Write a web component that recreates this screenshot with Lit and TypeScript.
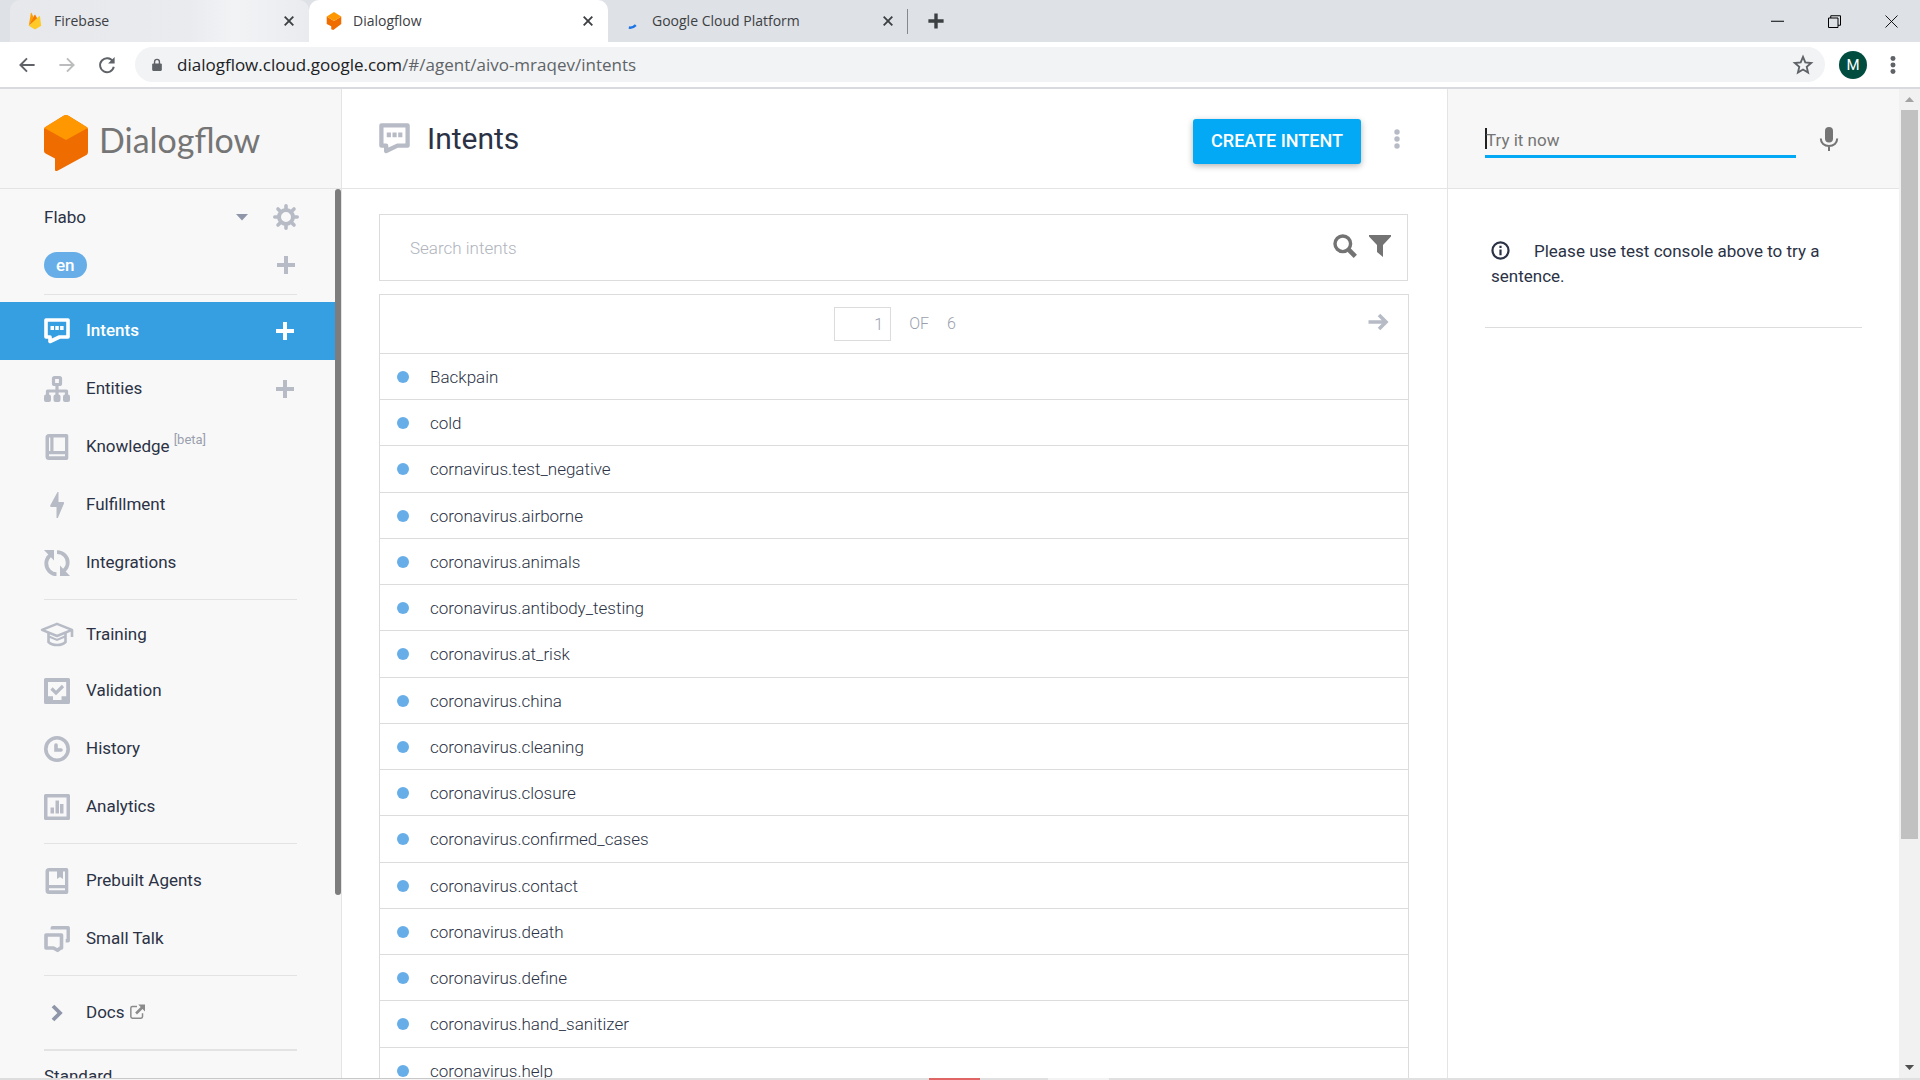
import { LitElement, html, svg, css, nothing } from "lit";
import { customElement, property, state } from "lit/decorators.js";
import { classMap } from "lit/directives/class-map.js";

/* ---------- icon set ---------- */

const chat = svg`
  <path d="M2 2h22v17h-8.500l-9.500 4.500v-4.500h-4z" fill="none" stroke="currentColor" stroke-width="3.600" stroke-linejoin="round"/>
  <path d="M6.500 8h3.500v4h-3.500zM11.300 8h3.500v4h-3.500zM16.100 8h3.500v4h-3.500z"/>`;

const icons: Record<string, unknown> = {
  chat,
  entities: svg`
    <rect x="9.500" y="1.500" width="7" height="7" rx="1" fill="none" stroke="currentColor" stroke-width="3.200"/>
    <path d="M13 9v11M3.500 20v-5h19v5" fill="none" stroke="currentColor" stroke-width="3.200" stroke-linejoin="round"/>
    <rect x="0" y="18.500" width="7" height="7.500" rx="2"/>
    <rect x="9.500" y="18.500" width="7" height="7.500" rx="2"/>
    <rect x="19" y="18.500" width="7" height="7.500" rx="2"/>`,
  knowledge: svg`
    <path fill-rule="evenodd" d="M5 0h17.500a1.800 1.800 0 0 1 1.800 1.800v22.400a1.800 1.800 0 0 1-1.800 1.800h-17.500a3.500 3.500 0 0 1-3.500-3.500v-19a3.500 3.500 0 0 1 3.500-3.500zM9.500 3.500v13.500h11.500v-13.500zM5 3.500v13.500h1.300v-13.500zM5 20.300v2h16v-2z"/>`,
  fulfillment: svg`<path d="M13.500 0 6.200 13.500 6.500 15h6v11h1.300L20 11.500 19.800 10h-5.300V0z"/>`,
  integrations: svg`
    <path d="M12.500 24.200C7 24.200 2.300 19.500 2.300 13.500 2.300 10 4 7 6.500 5M13 2.200C19 2.200 23.700 6.800 23.700 12.500 23.700 16 22 19 19.500 21" fill="none" stroke="currentColor" stroke-width="3.800"/>
    <path d="M0 0h10v10.500zM26 26h-10v-10.500z"/>`,
  training: svg`
    <path d="M-2 7.800 13 1.800 28 7.800 13 14z" fill="none" stroke="currentColor" stroke-width="2.500" stroke-linejoin="round"/>
    <path d="M4.500 10v10c2.500 2.500 5.500 3 8.500 3s6-.5 8.500-3V10M28 8v7" fill="none" stroke="currentColor" stroke-width="2.600"/>
    <path d="m5 14.500 8 3.500 8-3.500" fill="none" stroke="currentColor" stroke-width="2"/>`,
  validation: svg`
    <path fill-rule="evenodd" d="M1.500 0h23a1.500 1.500 0 0 1 1.500 1.500v23a1.500 1.500 0 0 1-1.500 1.500h-23a1.500 1.500 0 0 1-1.500-1.500v-23a1.500 1.500 0 0 1 1.500-1.500zM4 4v14.300h5v3.700h8.500v-3.700h4.700v-14.300z"/>
    <path d="m7.500 10.500 4.500 4.500 7-7" fill="none" stroke="currentColor" stroke-width="3.200"/>`,
  history: svg`
    <circle cx="13" cy="13" r="11.200" fill="none" stroke="currentColor" stroke-width="3.600"/>
    <path d="M12 9v5h5" fill="none" stroke="currentColor" stroke-width="3.600" stroke-linecap="round"/>`,
  analytics: svg`
    <path fill-rule="evenodd" d="M1.500 0h23a1.500 1.500 0 0 1 1.500 1.500v23a1.500 1.500 0 0 1-1.500 1.500h-23a1.500 1.500 0 0 1-1.500-1.500v-23a1.500 1.500 0 0 1 1.500-1.500zM3.500 3.500v19h19v-19z"/>
    <path d="M6.500 13.500h3.500v6h-3.500zM11.500 6.500h3.500v13h-3.500zM16 10h3.500v9.500h-3.500z"/>`,
  prebuilt: svg`
    <path fill-rule="evenodd" d="M5 0h17.500a1.800 1.800 0 0 1 1.800 1.800v22.400a1.800 1.800 0 0 1-1.800 1.800h-17.500a3.500 3.500 0 0 1-3.500-3.500v-19a3.500 3.500 0 0 1 3.500-3.500zM5 3.500v13.500h16v-13.500h-2v7.500l-3-2-3 2v-7.500zM5 20.300v2h16v-2z"/>`,
  smalltalk: svg`
    <path d="M2 9h15.500v13h-1l-3 2.300-4-2.300h-7.500z" fill="none" stroke="currentColor" stroke-width="3.600" stroke-linejoin="round"/>
    <path d="M8.300 3.500v-1.700h15.900v13h-2.500" fill="none" stroke="currentColor" stroke-width="3.400" stroke-linejoin="round"/>`,
  docs: svg`<path d="m9 6 7 7-7 7" fill="none" stroke="#8f96a9" stroke-width="3.800"/>`,
  plus: svg`<path d="M13 4v18M4 13h18" fill="none" stroke="currentColor" stroke-width="4"/>`,
  gear: svg`
    <circle cx="13" cy="13" r="7" fill="none" stroke="currentColor" stroke-width="4"/>
    <path d="M13 1.800v4M13 20.200v4M1.800 13h4M20.200 13h4M5 5l3 3M18 18l3 3M5 21l3-3M18 8l3-3" stroke="currentColor" stroke-width="3.600" stroke-linecap="round"/>`,
  caret: svg`<path d="M7 10h12l-6 6.500z"/>`,
  external: svg`
    <path d="M13 4H5.500C4 4 3 5 3 6.500v14C3 22 4 23 5.500 23h14c1.500 0 2.500-1 2.500-2.500V15" fill="none" stroke="currentColor" stroke-width="2.400"/>
    <path d="M15 1h11v11l-4-4-9 9-3-3 9-9z"/>`,
  kebab: svg`<circle cx="13" cy="6" r="2.700"/><circle cx="13" cy="13" r="2.700"/><circle cx="13" cy="20" r="2.700"/>`,
  search: svg`
    <circle cx="10.800" cy="10.800" r="7.800" fill="none" stroke="currentColor" stroke-width="3.400"/>
    <path d="m16 16 7.300 7.300" stroke="currentColor" stroke-width="4.600"/>`,
  filter: svg`<path d="M2 2h22v1.500L16 12v12l-6-5V12L2 3.500z"/>`,
  next: svg`<path d="M3.500 13h17M14 6l7 7-7 7" fill="none" stroke="currentColor" stroke-width="3.600"/>`,
  mic: svg`
    <rect x="9" y="1" width="8" height="15.500" rx="4"/>
    <path d="M4.800 12.500c0 4.500 3.500 7.500 8.200 7.500s8.200-3 8.200-7.500M13 20v5" fill="none" stroke="currentColor" stroke-width="2"/>`,
  info: svg`
    <circle cx="13" cy="13" r="11" fill="none" stroke="currentColor" stroke-width="3"/>
    <path d="M11.500 11.500h3v8h-3zM11.500 6.500h3v3h-3z"/>`,
  close: svg`<path d="m6 6 14 14M20 6 6 20" stroke="currentColor" stroke-width="3"/>`,
  back: svg`<path d="M24 13H4M13 3.500 3.500 13l9.500 9.500" fill="none" stroke="currentColor" stroke-width="2.800"/>`,
  forward: svg`<path d="M2 13h20M13 3.500 22.500 13 13 22.500" fill="none" stroke="currentColor" stroke-width="2.800"/>`,
  reload: svg`
    <path d="M21.500 8A10 10 0 1 0 22.800 15.500" fill="none" stroke="currentColor" stroke-width="2.800"/>
    <path d="M24 1.500v9.500h-9.500z"/>`,
  lock: svg`
    <rect x="4" y="10" width="18" height="14" rx="2"/>
    <path d="M8.500 11V7a4.500 4.500 0 0 1 9 0v4" fill="none" stroke="currentColor" stroke-width="2.600"/>`,
  star: svg`<path d="m13 3.500 2.700 6.500 7 .6-5.300 4.600 1.600 6.800L13 18.400 7 22l1.600-6.800L3.300 10.600l7-.6z" fill="none" stroke="currentColor" stroke-width="2.200"/>`,
  minimize: svg`<path d="M0 11.500h26v2h-26z"/>`,
  restore: svg`<path d="M1 6h19v19h-19zM5.500 6V1.500H25V20.500H20" fill="none" stroke="currentColor" stroke-width="2"/>`,
  exit: svg`<path d="m1 1 24 24M25 1 1 25" stroke="currentColor" stroke-width="1.800"/>`,
  spinner: svg`<path d="M7 22.500c3 .5 7-.5 10-3.500" fill="none" stroke="#1a73e8" stroke-width="3.600"/>`,
  flame: svg`
    <path d="m4 20 3-18.500c.1-.6.800-.7 1-.2L11 7.500z" fill="#ffa000"/>
    <path d="M4 20 12.300 4.500c.3-.5.900-.5 1.200 0L17 11z" fill="#f57c00"/>
    <path d="m4 20 15-14c.4-.4 1-.2 1.100.3L22 20l-7.700 4.700c-.8.400-1.800.4-2.600 0z" fill="#ffca28"/>`,
  dialog: svg`
    <path d="M2.500 6.500 13 13l10.500-6.500v11L12 26l-3-1v-4.500l-6.500-3z" fill="#ef6c00"/>
    <path d="M13 0 2.500 6.500 13 13l10.500-6.500z" fill="#ff9800"/>`,
  up: svg`<path d="M6 17h14l-7-8z"/>`,
  down: svg`<path d="M6 9h14l-7 8z"/>`,
};

@customElement("df-icon")
export class DfIcon extends LitElement {
  @property() name = "chat";

  static styles = css`
    :host { display: inline-flex; flex: none; width: 26px; height: 26px; }
    .glyph { width: 100%; height: 100%; fill: currentColor; overflow: visible; display: block; }
  `;

  render() {
    return html`<svg class="glyph" viewBox="0 0 26 26" aria-hidden="true">${icons[this.name]}</svg>`;
  }
}

/* ---------- browser chrome ---------- */

const TABS = [
  { title: "Firebase", icon: "flame", kind: "hover" },
  { title: "Dialogflow", icon: "dialog", kind: "active" },
  { title: "Google Cloud Platform", icon: "spinner", kind: "plain" },
];

@customElement("browser-bar")
export class BrowserBar extends LitElement {
  static styles = css`
    :host { display: block; flex: none; font-family: "Open Sans", "Noto Sans", sans-serif; color: #3c4043; }
    button { border: 0; padding: 0; margin: 0; background: none; color: inherit; font: inherit; display: flex; align-items: center; justify-content: center; }
    .strip { display: flex; align-items: center; height: 42px; padding-left: 10px; background: #dee1e6; }
    .tab { display: flex; align-items: center; box-sizing: border-box; width: 299px; height: 42px; padding: 0 12px 0 16px; font-size: 14px; border-radius: 10px 10px 0 0; }
    .tab.hover { background: linear-gradient(90deg, #e6e8ec, #e9ebef 60%, #f2f3f5 75%, #e9ebef); }
    .tab.active { background: #ffffff; }
    .tab.plain { padding-right: 11px; }
    .fav { width: 18px; height: 20px; margin-right: 10px; }
    .name { flex: 1; white-space: nowrap; padding-bottom: 2px; }
    .x { width: 16px; height: 16px; }
    .rule { width: 1px; height: 25px; background: #85888c; }
    .new { width: 56px; }
    .new df-icon { width: 22px; height: 22px; }
    .grow { flex: 1; }
    .win { width: 57px; height: 36px; color: #000000; }
    .win df-icon { width: 13px; height: 13px; }
    .bar { display: flex; align-items: center; height: 45px; padding: 0 15px 0 18px; background: #ffffff; border-bottom: 2px solid #d9dae0; color: #5f6368; }
    .nav { width: 18px; height: 18px; margin-right: 22px; }
    .nav df-icon { width: 18px; height: 18px; }
    .nav.off { color: #babcbe; }
    .nav.last { margin-right: 19px; }
    .pill { flex: 1; display: flex; align-items: center; height: 35px; padding: 0 11px 0 15px; border-radius: 18px; background: #f1f3f4; }
    .pill .lock { width: 14px; height: 16px; margin-right: 13px; }
    .url { flex: 1; font-size: 17px; line-height: 24px; }
    .host { color: #202124; }
    .star df-icon { width: 22px; height: 22px; }
    .me { width: 28px; height: 28px; margin: 0 14px; border-radius: 14px; background: #004d40; color: #ffffff; font: 15px/28px Roboto, sans-serif; }
    .menu df-icon { width: 24px; height: 24px; }
  `;

  render() {
    return html`
      <div class="strip">
        ${TABS.map((t) => html`
          <div class="tab ${t.kind}">
            <df-icon class="fav" name=${t.icon}></df-icon>
            <span class="name">${t.title}</span>
            <button aria-label="Close tab"><df-icon class="x" name="close"></df-icon></button>
          </div>`)}
        <span class="rule"></span>
        <button class="new" aria-label="New tab"><df-icon name="plus"></df-icon></button>
        <span class="grow"></span>
        <button class="win" aria-label="Minimize"><df-icon name="minimize"></df-icon></button>
        <button class="win" aria-label="Restore"><df-icon name="restore"></df-icon></button>
        <button class="win" aria-label="Close"><df-icon name="exit"></df-icon></button>
      </div>
      <div class="bar">
        <button class="nav" aria-label="Back"><df-icon name="back"></df-icon></button>
        <button class="nav off" aria-label="Forward"><df-icon name="forward"></df-icon></button>
        <button class="nav last" aria-label="Reload"><df-icon name="reload"></df-icon></button>
        <div class="pill">
          <df-icon class="lock" name="lock"></df-icon>
          <span class="url"><span class="host">dialogflow.cloud.google.com</span>/#/agent/aivo-mraqev/intents</span>
          <button class="star" aria-label="Bookmark"><df-icon name="star"></df-icon></button>
        </div>
        <button class="me" aria-label="Profile">M</button>
        <button class="menu" aria-label="Browser menu"><df-icon name="kebab"></df-icon></button>
      </div>`;
  }
}

/* ---------- sidebar ---------- */

interface NavItem { label: string; icon: string; add?: boolean; beta?: boolean; out?: boolean; }

const GROUPS: NavItem[][] = [
  [
    { label: "Intents", icon: "chat", add: true },
    { label: "Entities", icon: "entities", add: true },
    { label: "Knowledge", icon: "knowledge", beta: true },
    { label: "Fulfillment", icon: "fulfillment" },
    { label: "Integrations", icon: "integrations" },
  ],
  [
    { label: "Training", icon: "training" },
    { label: "Validation", icon: "validation" },
    { label: "History", icon: "history" },
    { label: "Analytics", icon: "analytics" },
  ],
  [
    { label: "Prebuilt Agents", icon: "prebuilt" },
    { label: "Small Talk", icon: "smalltalk" },
  ],
  [{ label: "Docs", icon: "docs", out: true }],
];

@customElement("df-sidebar")
export class DfSidebar extends LitElement {
  @state() private current = "Intents";

  static styles = css`
    :host { display: flex; flex-direction: column; flex: none; width: 341px; min-height: 0; background: #f8f8f8; border-right: 1px solid #e4e4e4; color: #2b3245; font: 17px/26px Roboto, sans-serif; }
    button { border: 0; padding: 0; margin: 0; background: none; color: #b7bbc5; display: flex; }
    .brand { display: flex; align-items: center; flex: none; box-sizing: border-box; height: 100px; padding: 8px 44px 0; gap: 11px; border-bottom: 1px solid #e4e4e4; background: #f7f7f7; }
    .mark { width: 44px; height: 56px; flex: none; }
    .word { padding-bottom: 5px; color: #757575; font: 34px/48px Lato, sans-serif; }
    .body { display: flex; flex: 1; min-height: 0; overflow: hidden; }
    .panel { flex: 1; min-width: 0; }
    .thumb { width: 6px; height: 706px; border-radius: 3px; background: #7d7d7d; flex: none; }
    .agent { display: flex; align-items: center; height: 56px; padding: 0 36px 0 44px; }
    .pick { flex: 1; display: flex; align-items: center; }
    select { flex: 1; appearance: none; border: 0; padding: 0; background: none; color: inherit; font: inherit; }
    .pick df-icon { color: #8f96a9; margin-right: 18px; }
    .langs { display: flex; align-items: center; justify-content: space-between; box-sizing: border-box; height: 41px; padding: 0 36px 2px 44px; }
    .lang { height: 26px; padding: 0 12px; border-radius: 13px; background: #67aee9; color: #ffffff; font: 500 17px/26px Roboto, sans-serif; }
    .split { height: 0; margin: 7px 38px 8px 44px; border: 0; border-top: 1px solid #e3e3e3; }
    .split.first { margin-top: 8px; margin-bottom: 7px; }
    .split.end { border-top-width: 2px; }
    .item { display: flex; align-items: center; height: 58px; padding: 0 37px 0 44px; }
    .item.on { background: #369fe1; color: #ffffff; }
    .item.on df-icon { color: #ffffff; }
    .item.on .link { font-weight: 500; }
    .item.short { height: 54px; }
    .link { flex: 1; display: flex; align-items: center; gap: 16px; color: inherit; text-decoration: none; }
    .link df-icon { color: #b7bbc5; }
    .text { display: flex; align-items: center; padding-bottom: 2px; }
    .beta { margin: 0 0 12px 4px; color: #9a9fae; font-size: 13px; line-height: 16px; }
    .link df-icon.out { width: 16px; height: 16px; margin-left: 4px; color: #8b8b8b; }
    .plan { padding: 4px 44px; }
  `;

  private renderItem(i: NavItem) {
    const on = i.label === this.current;
    return html`
      <div class=${classMap({ item: true, on, short: i.label === "Training" })}>
        <a class="link" href="#${i.label}" @click=${() => (this.current = i.label)}>
          <df-icon name=${i.icon}></df-icon>
          <span class="text">${i.label}${i.beta ? html`<span class="beta">[beta]</span>` : nothing}${i.out ? html`<df-icon class="out" name="external"></df-icon>` : nothing}</span>
        </a>
        ${i.add ? html`<button aria-label="Add ${i.label}"><df-icon name="plus"></df-icon></button>` : nothing}
      </div>`;
  }

  render() {
    return html`
      <div class="brand">
        <svg class="mark" viewBox="0 0 44 56" aria-hidden="true">
          <path d="M0 14.500Q0 12.800 1.400 12L19.600.8Q22 -.6 24.400.8L42.600 12Q44 12.800 44 14.500V37Q44 39 42.400 40L14 55.600Q11 57 11 54.500V43.500L1.600 38.500Q0 37.600 0 36z" fill="#ef6c00"/>
          <path d="M.3 13Q.6 12.400 1.400 12L19.600.8Q22 -.6 24.400.8L42.600 12Q43.400 12.400 43.700 13L22 25z" fill="#ff9800"/>
        </svg>
        <span class="word">Dialogflow</span>
      </div>
      <div class="body">
        <nav class="panel">
          <div class="agent">
            <label class="pick">
              <select aria-label="Agent"><option>Flabo</option></select>
              <df-icon name="caret"></df-icon>
            </label>
            <button aria-label="Agent settings"><df-icon name="gear"></df-icon></button>
          </div>
          <div class="langs">
            <button class="lang">en</button>
            <button aria-label="Add language"><df-icon name="plus"></df-icon></button>
          </div>
          ${GROUPS.map((g, n) => html`
            <hr class="split ${n === 0 ? "first" : ""}" />
            ${g.map((i) => this.renderItem(i))}`)}
          <hr class="split end" />
          <div class="plan">Standard</div>
        </nav>
        <div class="thumb"></div>
      </div>`;
  }
}

/* ---------- intents list ---------- */

const INTENTS = [
  "Backpain", "cold", "cornavirus.test_negative", "coronavirus.airborne",
  "coronavirus.animals", "coronavirus.antibody_testing", "coronavirus.at_risk",
  "coronavirus.china", "coronavirus.cleaning", "coronavirus.closure",
  "coronavirus.confirmed_cases", "coronavirus.contact", "coronavirus.death",
  "coronavirus.define", "coronavirus.hand_sanitizer", "coronavirus.help",
];

@customElement("df-intents")
export class DfIntents extends LitElement {
  static styles = css`
    :host { display: flex; flex-direction: column; flex: 1; min-width: 0; min-height: 0; overflow: hidden; background: #ffffff; color: #2b3245; font: 300 17px/26px Roboto, sans-serif; }
    button { border: 0; padding: 0; margin: 0; background: none; color: #b7bbc5; display: flex; align-items: center; }
    .head { display: flex; align-items: center; flex: none; box-sizing: border-box; height: 100px; padding: 0 37px; border-bottom: 1px solid #e4e4e4; }
    .head .big { width: 31px; height: 31px; color: #b7bbc5; }
    h1 { flex: 1; margin: 0 0 0 17px; font: 400 30px/40px Roboto, sans-serif; }
    .create { height: 45px; margin: 5px 23px 0 0; padding: 0 18px; border-radius: 3px; background: #03a9f4; color: #ffffff; font: 500 18px/24px Roboto, sans-serif; box-shadow: 0 2px 6px rgba(0, 0, 0, 0.3); }
    .content { padding: 25px 38px 0 37px; }
    .find { display: flex; align-items: center; box-sizing: border-box; height: 67px; padding: 0 14px 0 30px; margin-right: 1px; border: 1px solid #dcdcdc; }
    input { border: 0; outline: 0; padding: 0; background: none; color: inherit; font: inherit; }
    .find input { flex: 1; min-width: 0; }
    .find input::placeholder { color: #b0b4bd; opacity: 1; }
    .find button { color: #737373; margin-left: 9px; padding-bottom: 4px; }
    .list { margin-top: 13px; border: 1px solid #dcdcdc; }
    .pager { display: grid; grid-template-columns: 1fr auto 1fr; align-items: center; height: 58px; padding: 0 17px 0 19px; color: #9a9fae; font-size: 16px; }
    .pages { grid-column: 2; display: flex; align-items: center; gap: 18px; }
    .pages input { box-sizing: border-box; width: 57px; height: 34px; padding: 0 7px; border: 1px solid #dcdcdc; text-align: right; }
    .next { justify-self: end; padding-bottom: 4px; }
    ul { margin: 0; padding: 0; list-style: none; }
    .row { display: flex; align-items: center; gap: 21px; height: 45px; padding: 0 17px; border-top: 1px solid #dcdcdc; }
    .row:nth-child(4n + 3) { height: 46px; }
    .dot { width: 12px; height: 12px; border-radius: 6px; background: #67aee9; }
    .row a { color: inherit; text-decoration: none; }
  `;

  render() {
    return html`
      <header class="head">
        <df-icon class="big" name="chat"></df-icon>
        <h1>Intents</h1>
        <button class="create">CREATE INTENT</button>
        <button aria-label="More"><df-icon name="kebab"></df-icon></button>
      </header>
      <section class="content">
        <div class="find">
          <input type="text" placeholder="Search intents" aria-label="Search intents" />
          <button aria-label="Search"><df-icon name="search"></df-icon></button>
          <button aria-label="Filter"><df-icon name="filter"></df-icon></button>
        </div>
        <div class="list">
          <div class="pager">
            <div class="pages">
              <input type="text" .value=${"1"} aria-label="Page" />
              <span>OF</span>
              <span>6</span>
            </div>
            <button class="next" aria-label="Next page"><df-icon name="next"></df-icon></button>
          </div>
          <ul>
            ${INTENTS.map((name) => html`
              <li class="row"><span class="dot"></span><a href="#${name}">${name}</a></li>`)}
          </ul>
        </div>
      </section>`;
  }
}

/* ---------- test console ---------- */

@customElement("df-console")
export class DfConsole extends LitElement {
  static styles = css`
    :host { display: block; flex: none; width: 451px; border-left: 1px solid #e4e4e4; background: #ffffff; color: #2b3245; font: 17px/25px Roboto, sans-serif; }
    .head { display: flex; align-items: center; box-sizing: border-box; height: 100px; padding: 5px 57px 0 37px; gap: 20px; border-bottom: 1px solid #e4e4e4; background: #f7f7f7; }
    input { flex: 1; min-width: 0; height: 31px; border: 0; border-bottom: 3px solid #03a9f4; outline: 0; padding: 0 0 0 1px; color: #2b3245; caret-color: transparent; font: inherit; background: linear-gradient(#212121, #212121) 0 4px / 2px 21px no-repeat; }
    input::placeholder { color: #757575; opacity: 1; }
    button { border: 0; padding: 0 0 4px; background: none; color: #757575; display: flex; }
    .hint { margin: 0 37px; padding: 50px 20px 38px 6px; border-bottom: 1px solid #dcdcdc; }
    .hint p { margin: 0; }
    .hint df-icon { width: 19px; height: 19px; margin-right: 24px; vertical-align: -3px; }
  `;

  render() {
    return html`
      <div class="head">
        <input type="text" placeholder="Try it now" aria-label="Try it now" />
        <button aria-label="Speak"><df-icon name="mic"></df-icon></button>
      </div>
      <div class="hint">
        <p><df-icon name="info"></df-icon>Please use test console above to try a sentence.</p>
      </div>`;
  }
}

/* ---------- page ---------- */

@customElement("app-root")
export class AppRoot extends LitElement {
  static styles = css`
    :host { display: flex; flex-direction: column; height: 100vh; overflow: hidden; }
    .page { flex: 1; display: flex; min-height: 0; overflow: hidden; }
    .scroll { display: flex; flex-direction: column; align-items: center; flex: none; width: 21px; background: #f1f1f1; color: #a3a3a3; }
    .scroll df-icon { width: 17px; height: 21px; }
    .scroll .down { color: #505050; }
    .track { flex: 1; align-self: stretch; padding: 0 2px; }
    .thumb { height: 77%; background: #c1c1c1; }
    .task { display: flex; flex: none; height: 2px; background: #e0e0e0; }
    .start { width: 60px; background: #dddddd; }
    .box { box-sizing: border-box; width: 430px; border-top: 1px solid #c8c8c8; background: #f5f5f5; }
    .alert { width: 51px; margin: 0 68px 0 439px; background: #e06666; }
    .app { width: 61px; background: #f3f3f3; }
  `;

  render() {
    return html`
      <browser-bar></browser-bar>
      <div class="page">
        <df-sidebar></df-sidebar>
        <df-intents></df-intents>
        <df-console></df-console>
        <div class="scroll">
          <df-icon name="up"></df-icon>
          <div class="track"><div class="thumb"></div></div>
          <df-icon class="down" name="down"></df-icon>
        </div>
      </div>
      <div class="task">
        <span class="start"></span><span class="box"></span><span class="alert"></span><span class="app"></span>
      </div>`;
  }
}
